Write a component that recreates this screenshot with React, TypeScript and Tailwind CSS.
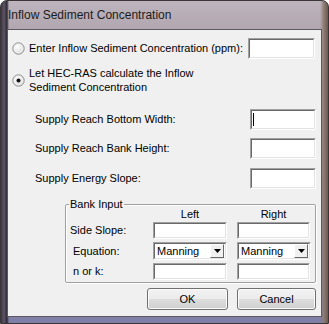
import React from "react";

const font = "font-['Liberation_Sans',Arial,sans-serif]";

function Sunken({ w, h, children }: { w: string; h: string; children?: React.ReactNode }) {
  return (
    <div className={`${w} ${h} border border-t-[#a0a0a0] border-l-[#a0a0a0] border-b-white border-r-white`}>
      <div className="w-full h-full border border-t-[#696969] border-l-[#696969] border-b-[#e3e3e3] border-r-[#e3e3e3] bg-white flex items-center">
        {children}
      </div>
    </div>
  );
}

function Radio({ checked }: { checked?: boolean }) {
  return (
    <svg width="13" height="13" viewBox="0 0 13 13" className="shrink-0">
      <defs>
        <radialGradient id={checked ? "rg1" : "rg0"} cx="0.4" cy="0.35" r="0.7">
          <stop offset="0" stopColor="#ffffff" />
          <stop offset="1" stopColor="#d6d6d6" />
        </radialGradient>
      </defs>
      <circle cx="6.5" cy="6.5" r="5.7" fill={`url(#${checked ? "rg1" : "rg0"})`} stroke="#8e8f8f" strokeWidth="1" />
      <circle cx="6.5" cy="6.5" r="4.2" fill="none" stroke="#f4f4f4" strokeWidth="1" />
      {checked && <circle cx="6.5" cy="6.5" r="2" fill="#111" />}
    </svg>
  );
}

function Combo() {
  return (
    <Sunken w="w-[74px]" h="h-[18px]">
      <span className="pl-[2px] text-[11px] leading-none text-black flex-1">Manning</span>
      <div className="w-[14px] h-[14px] mr-[1px] bg-[#f0f0f0] border border-t-white border-l-white border-b-[#696969] border-r-[#696969] flex items-center justify-center">
        <svg width="7" height="4" viewBox="0 0 7 4">
          <path d="M0 0 H7 L3.5 4 Z" fill="#000" />
        </svg>
      </div>
    </Sunken>
  );
}

function Button({ w, label }: { w: string; label: string }) {
  return (
    <div
      className={`${w} h-[22px] rounded-[3px] border border-[#707070] bg-[linear-gradient(to_bottom,#f2f2f2_0%,#ebebeb_50%,#dddddd_51%,#cfcfcf_100%)] flex items-center justify-center text-[11px] text-black shadow-[inset_0_0_0_1px_#fbfbfb]`}
    >
      {label}
    </div>
  );
}

export default function App() {
  return (
    <div
      className={`${font} relative w-[329px] h-[324px] rounded-t-[7px] border border-[#3a3539] overflow-hidden bg-[linear-gradient(90deg,#3c3441_0px,#5d5566_3px,#2f2935_6px,transparent_8px),linear-gradient(270deg,#6b5a52_0px,#8d7a70_4px,transparent_8px),linear-gradient(to_bottom,#bdb4bd_0%,#aea2ab_12%,#8f8490_60%,#7f7fa8_100%)]`}
    >
      <div className="h-[28px] pl-[7px] pt-[7px] text-[12px] leading-[14px] text-[#1b1b1b]">
        Inflow Sediment Concentration
      </div>
      <div className="ml-[6px] w-[315px] h-[288px] border border-[#5d5860] bg-[#f0f0f0] text-[11px] leading-[13px] text-black">
        {/* Row 1 */}
        <div className="mt-[8px] h-[21px] flex items-center">
          <div className="w-[21px] pl-[4px] flex items-center">
            <Radio />
          </div>
          <span className="w-[219px] whitespace-nowrap">Enter Inflow Sediment Concentration (ppm):</span>
          <Sunken w="w-[67px]" h="h-[21px]" />
        </div>
        {/* Row 2 */}
        <div className="mt-[7px] h-[28px] flex items-center">
          <div className="w-[21px] pl-[4px] flex items-center">
            <Radio checked />
          </div>
          <div className="leading-[14px]">
            <div>Let HEC-RAS calculate the Inflow</div>
            <div>Sediment Concentration</div>
          </div>
        </div>
        {/* Supply rows */}
        <div className="mt-[15px] h-[21px] flex items-center">
          <span className="pl-[27px] w-[242px]">Supply Reach Bottom Width:</span>
          <Sunken w="w-[66px]" h="h-[21px]">
            <div className="ml-[1px] w-[1px] h-[13px] bg-black" />
          </Sunken>
        </div>
        <div className="mt-[8px] h-[21px] flex items-center">
          <span className="pl-[27px] w-[242px]">Supply Reach Bank Height:</span>
          <Sunken w="w-[66px]" h="h-[21px]" />
        </div>
        <div className="mt-[9px] h-[21px] flex items-center">
          <span className="pl-[27px] w-[242px]">Supply Energy Slope:</span>
          <Sunken w="w-[66px]" h="h-[21px]" />
        </div>
        {/* Group box */}
        <div className="mt-[15px] ml-[57px] w-[251px] h-[79px] relative border border-[#a0a0a0] rounded-[2px] shadow-[inset_1px_1px_0_#ffffff,1px_1px_0_#ffffff]">
          <span className="absolute left-[3px] top-[-8px] px-[1px] bg-[#f0f0f0] leading-[14px]">Bank Input</span>
          <div className="mt-[2px] h-[14px] flex items-center">
            <span className="w-[87px]" />
            <span className="w-[74px] text-center">Left</span>
            <span className="w-[10px]" />
            <span className="w-[73px] text-center">Right</span>
          </div>
          <div className="mt-[1px] h-[17px] flex items-center">
            <span className="w-[87px] pl-[4px]">Side Slope:</span>
            <Sunken w="w-[74px]" h="h-[17px]" />
            <span className="w-[10px]" />
            <Sunken w="w-[73px]" h="h-[17px]" />
          </div>
          <div className="mt-[3px] h-[18px] flex items-center">
            <span className="w-[87px] pl-[7px]">Equation:</span>
            <Combo />
            <span className="w-[10px]" />
            <Combo />
          </div>
          <div className="mt-[3px] h-[17px] flex items-center">
            <span className="w-[87px] pl-[7px]">n or k:</span>
            <Sunken w="w-[74px]" h="h-[17px]" />
            <span className="w-[10px]" />
            <Sunken w="w-[73px]" h="h-[17px]" />
          </div>
        </div>
        {/* Buttons */}
        <div className="mt-[5px] pl-[139px] flex gap-[9px]">
          <Button w="w-[81px]" label="OK" />
          <Button w="w-[79px]" label="Cancel" />
        </div>
      </div>
    </div>
  );
}
